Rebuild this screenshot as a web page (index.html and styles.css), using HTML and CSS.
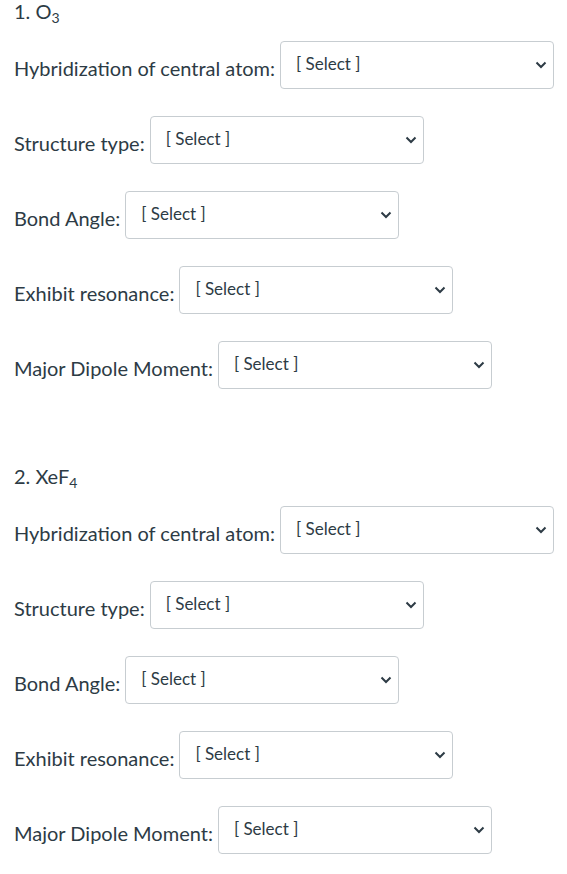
FILE: index.html
```html
<!DOCTYPE html>
<html>
<head>
<meta charset="utf-8">
<link rel="stylesheet" href="styles.css">
</head>
<body>
<div class="page">
  <div class="question">
    <div class="title">1. O<sub>3</sub></div>
    <div class="rows">
      <div class="row"><span class="label">Hybridization of central atom:</span><div class="select"><span class="val">[ Select ]</span><svg class="chev" width="12" height="8" viewBox="0 0 12 8"><path d="M1.5 1.5 L6 6 L10.5 1.5" fill="none" stroke="#2d3b45" stroke-width="2"/></svg></div></div>
      <div class="row"><span class="label">Structure type:</span><div class="select"><span class="val">[ Select ]</span><svg class="chev" width="12" height="8" viewBox="0 0 12 8"><path d="M1.5 1.5 L6 6 L10.5 1.5" fill="none" stroke="#2d3b45" stroke-width="2"/></svg></div></div>
      <div class="row"><span class="label">Bond Angle:</span><div class="select"><span class="val">[ Select ]</span><svg class="chev" width="12" height="8" viewBox="0 0 12 8"><path d="M1.5 1.5 L6 6 L10.5 1.5" fill="none" stroke="#2d3b45" stroke-width="2"/></svg></div></div>
      <div class="row"><span class="label">Exhibit resonance:</span><div class="select"><span class="val">[ Select ]</span><svg class="chev" width="12" height="8" viewBox="0 0 12 8"><path d="M1.5 1.5 L6 6 L10.5 1.5" fill="none" stroke="#2d3b45" stroke-width="2"/></svg></div></div>
      <div class="row"><span class="label">Major Dipole Moment:</span><div class="select"><span class="val">[ Select ]</span><svg class="chev" width="12" height="8" viewBox="0 0 12 8"><path d="M1.5 1.5 L6 6 L10.5 1.5" fill="none" stroke="#2d3b45" stroke-width="2"/></svg></div></div>
    </div>
  </div>
  <div class="question second">
    <div class="title">2. XeF<sub>4</sub></div>
    <div class="rows">
      <div class="row"><span class="label">Hybridization of central atom:</span><div class="select"><span class="val">[ Select ]</span><svg class="chev" width="12" height="8" viewBox="0 0 12 8"><path d="M1.5 1.5 L6 6 L10.5 1.5" fill="none" stroke="#2d3b45" stroke-width="2"/></svg></div></div>
      <div class="row"><span class="label">Structure type:</span><div class="select"><span class="val">[ Select ]</span><svg class="chev" width="12" height="8" viewBox="0 0 12 8"><path d="M1.5 1.5 L6 6 L10.5 1.5" fill="none" stroke="#2d3b45" stroke-width="2"/></svg></div></div>
      <div class="row"><span class="label">Bond Angle:</span><div class="select"><span class="val">[ Select ]</span><svg class="chev" width="12" height="8" viewBox="0 0 12 8"><path d="M1.5 1.5 L6 6 L10.5 1.5" fill="none" stroke="#2d3b45" stroke-width="2"/></svg></div></div>
      <div class="row"><span class="label">Exhibit resonance:</span><div class="select"><span class="val">[ Select ]</span><svg class="chev" width="12" height="8" viewBox="0 0 12 8"><path d="M1.5 1.5 L6 6 L10.5 1.5" fill="none" stroke="#2d3b45" stroke-width="2"/></svg></div></div>
      <div class="row"><span class="label">Major Dipole Moment:</span><div class="select"><span class="val">[ Select ]</span><svg class="chev" width="12" height="8" viewBox="0 0 12 8"><path d="M1.5 1.5 L6 6 L10.5 1.5" fill="none" stroke="#2d3b45" stroke-width="2"/></svg></div></div>
    </div>
  </div>
</div>
</body>
</html>
```

FILE: styles.css
```css
html, body {
  margin: 0;
  padding: 0;
  background: #ffffff;
}
.page {
  padding: 0 14px;
  font-family: Lato, "Liberation Sans", sans-serif;
  color: #2d3b45;
}
.question.second {
  margin-top: 76px;
}
.title {
  font-size: 20px;
  line-height: 22px;
  height: 22px;
}
.title sub {
  font-size: 14px;
  line-height: 0;
  vertical-align: -4px;
}
.rows {
  margin-top: 19px;
  display: flex;
  flex-direction: column;
  gap: 27px;
}
.row {
  display: flex;
  align-items: flex-start;
  gap: 5px;
  height: 48px;
}
.label {
  font-size: 20px;
  line-height: 24px;
  padding-top: 15px;
  white-space: nowrap;
}
.select {
  position: relative;
  box-sizing: border-box;
  width: 274px;
  height: 48px;
  border: 1px solid #c7cdd1;
  border-radius: 4px;
  background: #fff;
  flex: none;
}
.val {
  display: block;
  padding-left: 15px;
  padding-top: 10px;
  font-size: 17px;
  line-height: 24px;
}
.chev {
  position: absolute;
  right: 6px;
  top: 19px;
}
```
